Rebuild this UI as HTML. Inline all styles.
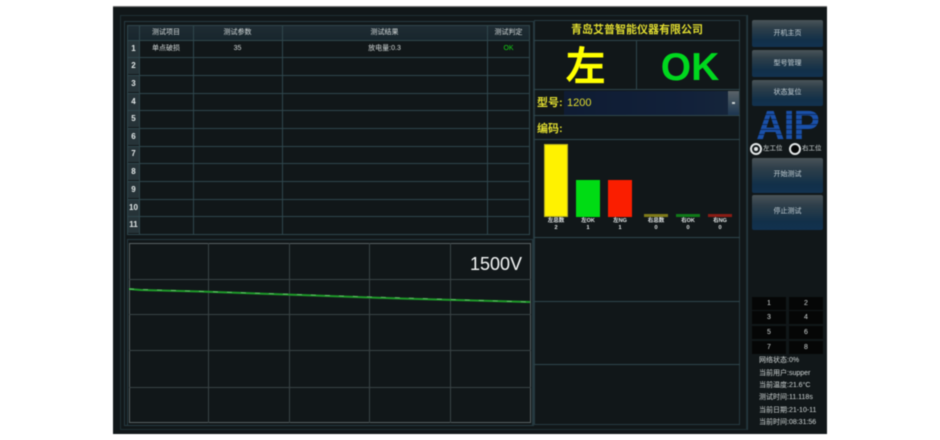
<!DOCTYPE html>
<html><head><meta charset="utf-8">
<style>
html,body{margin:0;padding:0;background:#fff;}
body{width:940px;height:440px;overflow:hidden;position:relative;font-family:"Liberation Sans","Noto Sans CJK SC",sans-serif;}
div{position:absolute;box-sizing:border-box;}
#w{left:0;top:0;width:940px;height:440px;filter:blur(0.55px);overflow:hidden;}
.h{height:1px;background:#2f464c;}
.v{width:1px;background:#2f464c;}
.g{background:#394345;}
.t{white-space:nowrap;text-align:center;color:#d4dada;font-size:7px;line-height:10px;}
.n{left:128px;width:11px;background:#263338;color:#e2e8e8;font-size:8px;font-weight:bold;text-align:center;height:16px;line-height:16px;}
.btn{left:752px;width:71px;border-radius:2px;background:linear-gradient(#4a5458 0%,#2e3f4a 30%,#123049 75%,#123250 100%);color:#c4d0d6;font-size:7px;text-align:center;}
.k{width:34px;height:13px;background:#050606;color:#d4dada;font-size:7px;line-height:13px;text-align:center;}
.s{left:759px;color:#d2d8d8;font-size:7px;line-height:10px;white-space:nowrap;}
.bl{color:#e4e8e8;font-size:5.5px;line-height:7px;text-align:center;white-space:nowrap;width:32px;font-weight:bold;}
</style></head><body>
<div id="w">
<div style="left:113px;top:6px;width:714px;height:428px;background:#111719;"></div>
<div style="left:113px;top:6px;width:714px;height:1px;background:#777;"></div>
<div style="left:120px;top:15px;width:627px;height:415px;border:1px solid #1e2f34;"></div>
<div style="left:124px;top:21px;width:410px;height:405px;border:1px solid #263a40;"></div>
<div style="left:747px;top:15px;width:1px;height:415px;background:#263a40;"></div>

<!-- table -->
<div style="left:127px;top:25px;width:403px;height:210px;border:1px solid #2f464c;"></div>
<div style="left:128px;top:26px;width:401px;height:14px;background:linear-gradient(#1f2c33,#18262d);"></div>
<div class="t" style="left:139px;top:28px;width:54px;">测试项目</div>
<div class="t" style="left:193px;top:28px;width:89px;">测试参数</div>
<div class="t" style="left:282px;top:28px;width:205px;">测试结果</div>
<div class="t" style="left:487px;top:28px;width:43px;">测试判定</div>
<div class="t" style="left:139px;top:44px;width:54px;">单点破损</div>
<div class="t" style="left:193px;top:44px;width:89px;">35</div>
<div class="t" style="left:282px;top:44px;width:205px;">放电量:0.3</div>
<div class="t" style="left:487px;top:44px;width:43px;color:#16d016;">OK</div>
<div class="n" style="top:41px;">1</div><div class="n" style="top:58px;">2</div><div class="n" style="top:76px;">3</div><div class="n" style="top:94px;">4</div><div class="n" style="top:111px;">5</div><div class="n" style="top:129px;">6</div><div class="n" style="top:146px;">7</div><div class="n" style="top:164px;">8</div><div class="n" style="top:182px;">9</div><div class="n" style="top:200px;">10</div><div class="n" style="top:217px;">11</div>
<div class="h" style="left:128px;top:40px;width:401px;"></div>
<div class="h" style="left:128px;top:57px;width:401px;"></div>
<div class="h" style="left:128px;top:75px;width:401px;"></div>
<div class="h" style="left:128px;top:93px;width:401px;"></div>
<div class="h" style="left:128px;top:110px;width:401px;"></div>
<div class="h" style="left:128px;top:128px;width:401px;"></div>
<div class="h" style="left:128px;top:146px;width:401px;"></div>
<div class="h" style="left:128px;top:163px;width:401px;"></div>
<div class="h" style="left:128px;top:181px;width:401px;"></div>
<div class="h" style="left:128px;top:199px;width:401px;"></div>
<div class="h" style="left:128px;top:216px;width:401px;"></div>
<div class="v" style="left:139px;top:26px;height:208px;"></div>
<div class="v" style="left:193px;top:26px;height:208px;"></div>
<div class="v" style="left:282px;top:26px;height:208px;"></div>
<div class="v" style="left:487px;top:26px;height:208px;"></div>

<!-- chart -->
<div style="left:127px;top:239px;width:406px;height:187px;border:1px solid #263a40;"></div>
<div style="left:129px;top:243px;width:402px;height:180px;border:1px solid #586162;"></div>
<div class="g" style="left:208px;top:243px;width:1px;height:180px;"></div>
<div class="g" style="left:289px;top:243px;width:1px;height:180px;"></div>
<div class="g" style="left:369px;top:243px;width:1px;height:180px;"></div>
<div class="g" style="left:450px;top:243px;width:1px;height:180px;"></div>
<div class="g" style="left:129px;top:279px;width:402px;height:1px;"></div>
<div class="g" style="left:129px;top:314px;width:402px;height:1px;"></div>
<div class="g" style="left:129px;top:350px;width:402px;height:1px;"></div>
<div class="g" style="left:129px;top:387px;width:402px;height:1px;"></div>
<svg style="position:absolute;left:0;top:0;" width="940" height="440"><polyline points="129,289 135,289.5 141,290 200,291.5 300,295 400,298.5 530,302" fill="none" stroke="#1f9a2a" stroke-width="2"/><polyline points="129,289 530,302" fill="none" stroke="#7ad07e" stroke-width="0.7" stroke-dasharray="5 9"/></svg>
<div style="left:470px;top:254px;color:#f4f6f6;font-size:18px;line-height:20px;white-space:nowrap;">1500V</div>

<!-- middle right -->
<div style="left:534px;top:20px;width:206px;height:405px;border:1px solid #263a40;"></div>
<div class="h" style="left:534px;top:40px;width:206px;"></div>
<div class="h" style="left:534px;top:89px;width:206px;"></div>
<div class="h" style="left:534px;top:115px;width:206px;"></div>
<div class="h" style="left:534px;top:139px;width:206px;"></div>
<div class="h" style="left:534px;top:237px;width:206px;"></div>
<div class="h" style="left:534px;top:301px;width:206px;"></div>
<div class="h" style="left:534px;top:364px;width:206px;"></div>
<div class="v" style="left:636px;top:41px;height:48px;"></div>
<div style="left:534px;top:23px;width:206px;text-align:center;color:#e0dc30;font-size:11px;line-height:15px;white-space:nowrap;font-weight:bold;">青岛艾普智能仪器有限公司</div>
<div style="left:535px;top:43px;width:101px;text-align:center;color:#ffff00;font-size:40px;line-height:48px;font-weight:bold;">左</div>
<div style="left:637px;top:44px;width:106px;text-align:center;color:#00d81e;font-size:39px;line-height:48px;font-weight:bold;">OK</div>
<div style="left:537px;top:96px;color:#e0dc30;font-size:11px;line-height:14px;white-space:nowrap;font-weight:bold;">型号:</div>
<div style="left:564px;top:91px;width:175px;height:24px;background:linear-gradient(90deg,#0f1c33,#12213a 70%,#16263a);"></div>
<div style="left:728px;top:91px;width:11px;height:24px;background:linear-gradient(#5a6468,#1c3550);"></div>
<div style="left:732px;top:102px;width:3px;height:2px;background:#c8d0d0;"></div>
<div style="left:567px;top:96px;color:#e0dc30;font-size:11px;line-height:14px;">1200</div>
<div style="left:537px;top:122px;color:#e0dc30;font-size:11px;line-height:14px;white-space:nowrap;font-weight:bold;">编码:</div>

<div style="left:544px;top:144px;width:24px;height:73px;background:#fff200;border:1px solid #b8b020;"></div>
<div style="left:576px;top:180px;width:24px;height:37px;background:#00dc14;"></div>
<div style="left:608px;top:180px;width:24px;height:37px;background:#fa1e00;"></div>
<div style="left:644px;top:214px;width:24px;height:3px;background:#7f7a18;"></div>
<div style="left:676px;top:214px;width:24px;height:3px;background:#0f7a18;"></div>
<div style="left:708px;top:214px;width:24px;height:3px;background:#8a1c14;"></div>
<div class="bl" style="left:540px;top:218px;">左总数<br>2</div>
<div class="bl" style="left:572px;top:218px;">左OK<br>1</div>
<div class="bl" style="left:604px;top:218px;">左NG<br>1</div>
<div class="bl" style="left:640px;top:218px;">右总数<br>0</div>
<div class="bl" style="left:672px;top:218px;">右OK<br>0</div>
<div class="bl" style="left:704px;top:218px;">右NG<br>0</div>

<!-- buttons -->
<div class="btn" style="top:20px;height:27px;line-height:27px;">开机主页</div>
<div class="btn" style="top:50px;height:27px;line-height:27px;">型号管理</div>
<div class="btn" style="top:80px;height:26px;line-height:26px;">状态复位</div>
<div style="left:747px;top:105px;width:81px;text-align:center;font-size:41px;line-height:41px;font-weight:bold;letter-spacing:-1px;transform:scaleX(.96);background:repeating-linear-gradient(#1a50a8 0,#1a50a8 4px,#0f2c5c 4px,#0f2c5c 5px);-webkit-background-clip:text;background-clip:text;color:transparent;">AIP</div>
<div style="left:750px;top:143px;width:12px;height:12px;border-radius:50%;border:2px solid #e4e8e8;background:#111719;"></div>
<div style="left:754px;top:147px;width:4px;height:4px;border-radius:50%;background:#e4e8e8;"></div>
<div class="t" style="left:763px;top:144px;font-size:6.5px;">左工位</div>
<div style="left:789px;top:143px;width:12px;height:12px;border-radius:50%;border:2px solid #e4e8e8;background:#050606;"></div>
<div class="t" style="left:802px;top:144px;font-size:6.5px;">右工位</div>
<div class="btn" style="top:158px;height:35px;line-height:34px;">开始测试</div>
<div class="btn" style="top:195px;height:35px;line-height:34px;">停止测试</div>

<div class="k" style="left:752px;top:297px;">1</div><div class="k" style="left:789px;top:297px;">2</div>
<div class="k" style="left:752px;top:311px;">3</div><div class="k" style="left:789px;top:311px;">4</div>
<div class="k" style="left:752px;top:326px;">5</div><div class="k" style="left:789px;top:326px;">6</div>
<div class="k" style="left:752px;top:341px;">7</div><div class="k" style="left:789px;top:341px;">8</div>
<div class="s" style="top:356px;">网络状态:0%</div>
<div class="s" style="top:369px;">当前用户:supper</div>
<div class="s" style="top:381px;">当前温度:21.6°C</div>
<div class="s" style="top:393px;">测试时间:11.118s</div>
<div class="s" style="top:406px;">当前日期:21-10-11</div>
<div class="s" style="top:418px;">当前时间:08:31:56</div>
</div>
</body></html>
